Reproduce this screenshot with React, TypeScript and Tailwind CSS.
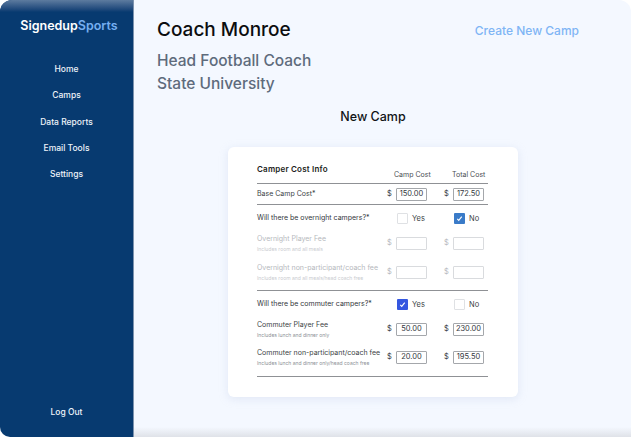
const navItems = ['Home', 'Camps', 'Data Reports', 'Email Tools', 'Settings'];

function Money({ value, muted }: { value?: string; muted?: boolean }) {
  return (
    <div className={`flex w-[40px] items-center justify-between text-[7.5px] ${muted ? 'text-[#b5b8bd]' : 'text-[#33373d]'}`}>
      <span>$</span>
      <div
        className={`flex h-[13px] w-[31px] items-center justify-center rounded-[1px] border ${
          muted ? 'border-[#d9dbde]' : 'border-[#a4a7ab]'
        }`}
      >
        {value}
      </div>
    </div>
  );
}

function Cols({ children }: { children: React.ReactNode }) {
  return <div className="flex shrink-0 gap-[17px] pr-[4px]">{children}</div>;
}

function FeeRow({
  title,
  note,
  a,
  b,
  muted,
  className,
}: {
  title: string;
  note: string;
  a?: string;
  b?: string;
  muted?: boolean;
  className?: string;
}) {
  return (
    <div className={`flex h-[20px] items-center justify-between ${className ?? ''}`}>
      <div className="min-w-0">
        <div className={`whitespace-nowrap text-[7px] leading-[11px] ${muted ? 'text-[#b5b8bd]' : 'text-[#3b3f45]'}`}>{title}</div>
        <div className={`mt-[1px] whitespace-nowrap text-[5px] leading-[8px] ${muted ? 'text-[#c9cbcf]' : 'text-[#8b8f96]'}`}>{note}</div>
      </div>
      <Cols>
        <Money value={a} muted={muted} />
        <Money value={b} muted={muted} />
      </Cols>
    </div>
  );
}

function Check({ checked, label, color }: { checked?: boolean; label: string; color?: string }) {
  return (
    <div className="flex w-[40px] items-center gap-[4px] pl-[10px] text-[7.5px] text-[#3b3f45]">
      <span
        className={`flex h-[11px] w-[11px] shrink-0 items-center justify-center rounded-[1px] ${
          checked ? color : 'border border-[#dfe1e4] bg-white'
        }`}
      >
        {checked && (
          <svg viewBox="0 0 12 12" className="h-[9px] w-[9px]" fill="none" stroke="white" strokeWidth="1.5">
            <path d="M3 6.5 L5 8.5 L9 3.5" />
          </svg>
        )}
      </span>
      {label}
    </div>
  );
}

export default function App() {
  return (
    <div className="relative flex h-[437px] w-[631px] overflow-hidden bg-white" style={{ fontFamily: 'Inter, sans-serif' }}>
      <aside className="relative flex w-[134px] shrink-0 flex-col items-center rounded-tl-[12px] rounded-bl-[10px] border-r border-[#7d93ae] bg-[#073a70] pt-[18px] pb-[19px]">
        <div className="absolute inset-x-0 top-0 h-[12px] rounded-tl-[12px] bg-gradient-to-b from-[#5d7b9f] to-[#073a70]" />
        <div className="relative ml-[5px] text-[12.5px] font-semibold leading-[16px] text-white">
          Signedup<span className="text-[#75aef0]">Sports</span>
        </div>
        <nav className="relative mt-[30px] flex flex-col items-center gap-[15.3px]">
          {navItems.map((item) => (
            <div key={item} className="text-[8.5px] font-medium leading-[11px] text-[#eef3f9]">
              {item}
            </div>
          ))}
        </nav>
        <div className="mt-auto text-[8.5px] font-medium leading-[11px] text-[#eef3f9]">Log Out</div>
      </aside>

      <main className="relative min-w-0 flex-1 rounded-r-[12px] bg-[#f4f8ff] pt-[18px] pl-[23px]">
        <div className="absolute inset-x-0 bottom-0 h-[10px] bg-gradient-to-b from-[#f4f8ff] to-[#dfe2e8]" />
        <div className="relative flex items-start">
          <h1 className="text-[19px] font-medium leading-[24px] text-[#0c0d0f]">Coach Monroe</h1>
          <div className="ml-auto mt-[5px] mr-[52px] text-[12px] font-medium leading-[15px] text-[#7fb5f5]">Create New Camp</div>
        </div>
        <div className="relative mt-[7px] text-[15.5px] font-medium leading-[23px] text-[#5e6b7c]">
          <div>Head Football Coach</div>
          <div>State University</div>
        </div>
        <h2 className="relative mt-[14px] mr-[42px] text-center text-[12.5px] font-medium leading-[16px] text-[#111316]">New Camp</h2>

        <section className="relative mt-[22px] ml-[71px] h-[250px] w-[290px] rounded-[6px] bg-white pt-[17px] pr-[30px] pl-[29px] shadow-[0_2px_8px_rgba(190,200,225,0.35)]">
          <div className="flex h-[19px] items-start justify-between">
            <div className="text-[8px] font-semibold leading-[11px] tracking-[0.2px] text-[#1b1d20]">Camper Cost Info</div>
            <div className="flex gap-[17px] pt-[6px] pr-[4px] text-[7px] leading-[10px] text-[#4a4e54]">
              <span className="w-[40px] whitespace-nowrap pl-[7px]">Camp Cost</span>
              <span className="w-[40px] whitespace-nowrap pl-[8px]">Total Cost</span>
            </div>
          </div>

          <div className="flex h-[22px] items-center justify-between border-y border-[#8f9195]">
            <span className="text-[7px] text-[#3b3f45]">Base Camp Cost*</span>
            <Cols>
              <Money value="150.00" />
              <Money value="172.50" />
            </Cols>
          </div>

          <div className="mt-[7px] flex h-[13px] items-center justify-between">
            <span className="whitespace-nowrap text-[7px] text-[#33373d]">Will there be overnight campers?*</span>
            <Cols>
              <Check label="Yes" />
              <Check label="No" checked color="bg-[#3a7bc8]" />
            </Cols>
          </div>

          <FeeRow className="mt-[8px]" title="Overnight Player Fee" note="Includes room and all meals" muted />
          <FeeRow className="mt-[9px]" title="Overnight non-participant/coach fee" note="Includes room and all meals/head coach free" muted />

          <div className="mt-[8px] border-t border-[#8f9195]" />

          <div className="mt-[7px] flex h-[13px] items-center justify-between">
            <span className="whitespace-nowrap text-[7px] text-[#33373d]">Will there be commuter campers?*</span>
            <Cols>
              <Check label="Yes" checked color="bg-[#3557e0]" />
              <Check label="No" />
            </Cols>
          </div>

          <FeeRow className="mt-[8px]" title="Commuter Player Fee" note="Includes lunch and dinner only" a="50.00" b="230.00" />
          <FeeRow className="mt-[8px]" title="Commuter non-participant/coach fee" note="Includes lunch and dinner only/head coach free" a="20.00" b="195.50" />

          <div className="mt-[9px] border-t border-[#8f9195]" />
        </section>
      </main>
    </div>
  );
}
